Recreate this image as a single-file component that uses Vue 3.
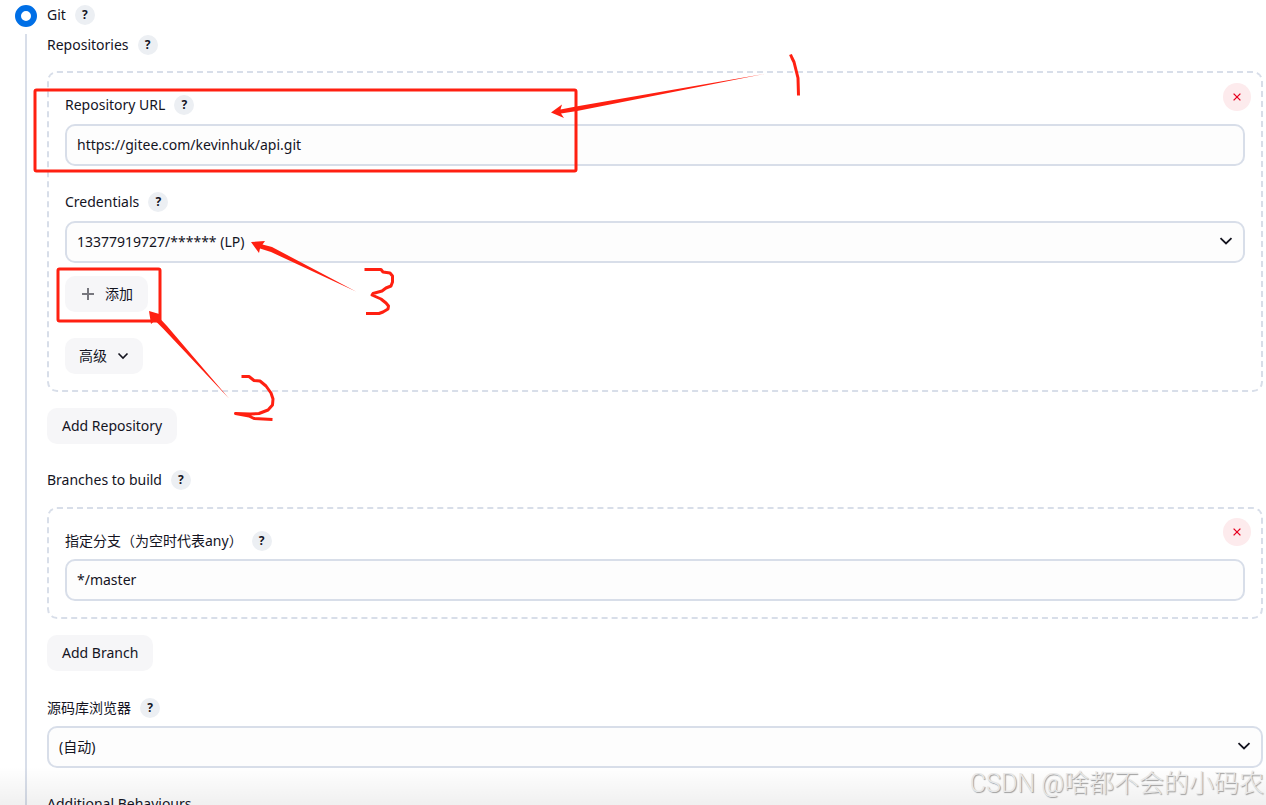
<script setup>
import { ref } from 'vue'

const scm = ref('git')
const url = ref('https://gitee.com/kevinhuk/api.git')
const branch = ref('*/master')
const credential = ref('lp')
const browser = ref('auto')
</script>

<template>
  <main class="page">
    <div class="rail">
      <input id="scm-git" v-model="scm" class="radio" type="radio" name="scm" value="git" />
      <span class="line"></span>
    </div>

    <div class="content">
      <div class="label-row git-row">
        <label for="scm-git">Git</label>
        <button class="help" type="button" aria-label="Git help">?</button>
      </div>

      <div class="label-row">
        <span>Repositories</span>
        <button class="help" type="button" aria-label="Repositories help">?</button>
      </div>

      <section class="chunk">
        <button class="remove" type="button" aria-label="Remove repository">
          <svg width="8" height="8" viewBox="0 0 8 8"><path d="M.6.6 7.4 7.4M7.4.6.6 7.4" /></svg>
        </button>
        <div class="field">
          <div class="label-row">
            <label for="url">Repository URL</label>
            <button class="help" type="button" aria-label="Repository URL help">?</button>
          </div>
          <input id="url" v-model="url" class="control" type="text" />
        </div>
        <div class="field">
          <div class="label-row">
            <label for="credentials">Credentials</label>
            <button class="help" type="button" aria-label="Credentials help">?</button>
          </div>
          <div class="select">
            <select id="credentials" v-model="credential" class="control">
              <option value="lp">13377919727/****** (LP)</option>
            </select>
            <svg class="chevron" width="14" height="8" viewBox="0 0 14 8"><path d="M1.5 1.2 7 6.5 12.5 1.2" /></svg>
          </div>
        </div>
        <button class="btn add" type="button">
          <svg width="12" height="12" viewBox="0 0 12 12"><path d="M6 0V12M0 6H12" /></svg>
          添加
        </button>
        <button class="btn advanced" type="button">
          高级
          <svg width="12" height="8" viewBox="0 0 12 8"><path d="M1.5 1.5 6 6 10.5 1.5" /></svg>
        </button>
      </section>

      <button class="btn wide" type="button">Add Repository</button>

      <div class="label-row group">
        <span>Branches to build</span>
        <button class="help" type="button" aria-label="Branches help">?</button>
      </div>

      <section class="chunk branches">
        <button class="remove" type="button" aria-label="Remove branch">
          <svg width="8" height="8" viewBox="0 0 8 8"><path d="M.6.6 7.4 7.4M7.4.6.6 7.4" /></svg>
        </button>
        <div class="field tight">
          <div class="label-row">
            <label for="branch">指定分支（为空时代表any）</label>
            <button class="help" type="button" aria-label="Branch specifier help">?</button>
          </div>
          <input id="branch" v-model="branch" class="control" type="text" />
        </div>
      </section>

      <button class="btn wide" type="button">Add Branch</button>

      <div class="field tight browser">
        <div class="label-row">
          <label for="browser">源码库浏览器</label>
          <button class="help" type="button" aria-label="Repository browser help">?</button>
        </div>
        <div class="select">
          <select id="browser" v-model="browser" class="control">
            <option value="auto">(自动)</option>
          </select>
          <svg class="chevron" width="14" height="8" viewBox="0 0 14 8"><path d="M1.5 1.2 7 6.5 12.5 1.2" /></svg>
        </div>
      </div>

      <div class="label-row group"><span>Additional Behaviours</span></div>
    </div>

    <div class="bottom-shade"></div>

    <svg class="marks" width="1266" height="805" viewBox="0 0 1266 805" aria-hidden="true">
      <g class="frames">
        <rect x="35" y="90" width="541" height="81" rx="1.5" />
        <rect x="58" y="269" width="102" height="52" rx="1.5" />
      </g>
      <g class="arrows">
        <path d="M764 74 576 106.500 560.500 109.500 562 104.500 551 112.500 564 118 561 113.500 577 111Z" />
        <path d="M356 291.500 272 247 262.500 244.500 265 241 251 242 259 253 260 248.500 271 252Z" />
        <path d="M229 398.500 167 326 159 317.500 161 314.500 149 311 151 324 155 320.500 163 328.500Z" />
      </g>
      <g class="strokes">
        <path d="M790.5 54.500 792 58 794 62 796 70 798 78 798.5 95.500" />
        <path d="M364.500 269.500 381 269.500 383 272 390 273 392.500 276 392.500 282 391 286 386 288 382 291 373 293.500 372 295 381 299 386 303 388.500 306 388 309 383 312 379 313.500 366 313.500" />
        <path d="M241.500 376.500 249 376.500 254 380.500 260 381 266 386 271 393 273 399 272.500 405 268 410 259 413.500 250 414 235.500 413.500 249 416 254 418.500 272.500 419.500" />
      </g>
    </svg>

    <div class="watermark">CSDN @啥都不会的小码农</div>
  </main>
</template>

<style>
body {
  background: #fff;
}
</style>

<style scoped>
.page {
  position: relative;
  display: flex;
  box-sizing: border-box;
  height: 100vh;
  padding: 5px 3px 0 15px;
  overflow: hidden;
  color: #14141f;
  font: 14px/20px "Noto Sans", "Noto Sans CJK SC", sans-serif;
}
button,
input,
select {
  box-sizing: border-box;
  margin: 0;
  color: inherit;
  font: inherit;
}
button {
  padding: 0;
  border: 0;
}
svg {
  fill: none;
  stroke: currentColor;
}
.rail {
  display: flex;
  flex: 0 0 32px;
  flex-direction: column;
  align-items: flex-start;
}
.radio {
  flex: none;
  width: 22px;
  height: 22px;
  appearance: none;
  background: #fff;
  border: 6px solid #006fe6;
  border-radius: 50%;
}
.line {
  flex: 1;
  width: 2px;
  margin: 7px 0 0 10px;
  background: #d8dee9;
}
.content {
  flex: 1;
  min-width: 0;
}
.label-row {
  display: flex;
  gap: 9px;
  align-items: center;
  height: 20px;
}
.label-row > :first-child {
  white-space: nowrap;
}
.git-row {
  margin-bottom: 10px;
}
.group {
  margin-top: 26px;
}
.help {
  flex: none;
  width: 20px;
  height: 20px;
  background: #eceff3;
  border-radius: 50%;
  font-size: 12px;
  font-weight: 700;
  line-height: 20px;
}
.chunk {
  position: relative;
  margin: 16px 0;
  padding: 22px 16px 16px;
  border: 2px dashed #d8dee9;
  border-radius: 10px;
}
.branches {
  margin-top: 17px;
}
.field + .field {
  margin-top: 26px;
}
.browser {
  margin-top: 27px;
}
.control {
  display: block;
  width: 100%;
  height: 42px;
  margin-top: 9px;
  padding: 0 10px;
  appearance: none;
  background: #fdfdfd;
  border: 2px solid #d8dee9;
  border-radius: 10px;
  outline: 0;
}
input.control {
  padding-bottom: 2px;
}
.tight .control {
  margin-top: 8px;
}
.select {
  position: relative;
}
.chevron {
  position: absolute;
  top: 16px;
  right: 12px;
  pointer-events: none;
  stroke-width: 1.8;
}
.remove {
  position: absolute;
  top: 10px;
  right: 10px;
  display: flex;
  align-items: center;
  justify-content: center;
  width: 28px;
  height: 28px;
  color: #e6001f;
  background: #fdebed;
  border-radius: 50%;
}
.branches .remove {
  top: 9px;
}
.remove svg {
  stroke-width: 1.3;
}
.btn {
  display: flex;
  gap: 10px;
  align-items: center;
  height: 36px;
  padding: 0 14px;
  background: #f6f6f8;
  border-radius: 10px;
}
.wide {
  padding: 0 15px;
}
.add {
  gap: 11px;
  margin: 13px 0 26px;
  padding: 0 15px 0 17px;
}
.add svg {
  color: #77777e;
  stroke-width: 2;
}
.advanced svg {
  stroke-width: 1.6;
}
.bottom-shade {
  position: absolute;
  inset: auto 0 0;
  height: 38px;
  background: linear-gradient(rgba(0, 0, 0, 0), rgba(0, 0, 0, 0.06));
  pointer-events: none;
}
.marks {
  position: absolute;
  top: 0;
  left: 0;
  pointer-events: none;
}
.frames,
.strokes {
  stroke: #ff2011;
  stroke-width: 3;
  stroke-linejoin: round;
}
.arrows {
  fill: #ff2011;
  stroke: none;
}
.watermark {
  position: absolute;
  right: 2px;
  bottom: 5px;
  color: #e8e8e8;
  font: 25px/32px Roboto, "Noto Sans CJK SC", sans-serif;
  font-weight: 300;
  text-shadow: 1px 1px 1px #999;
  white-space: nowrap;
  pointer-events: none;
}
</style>
